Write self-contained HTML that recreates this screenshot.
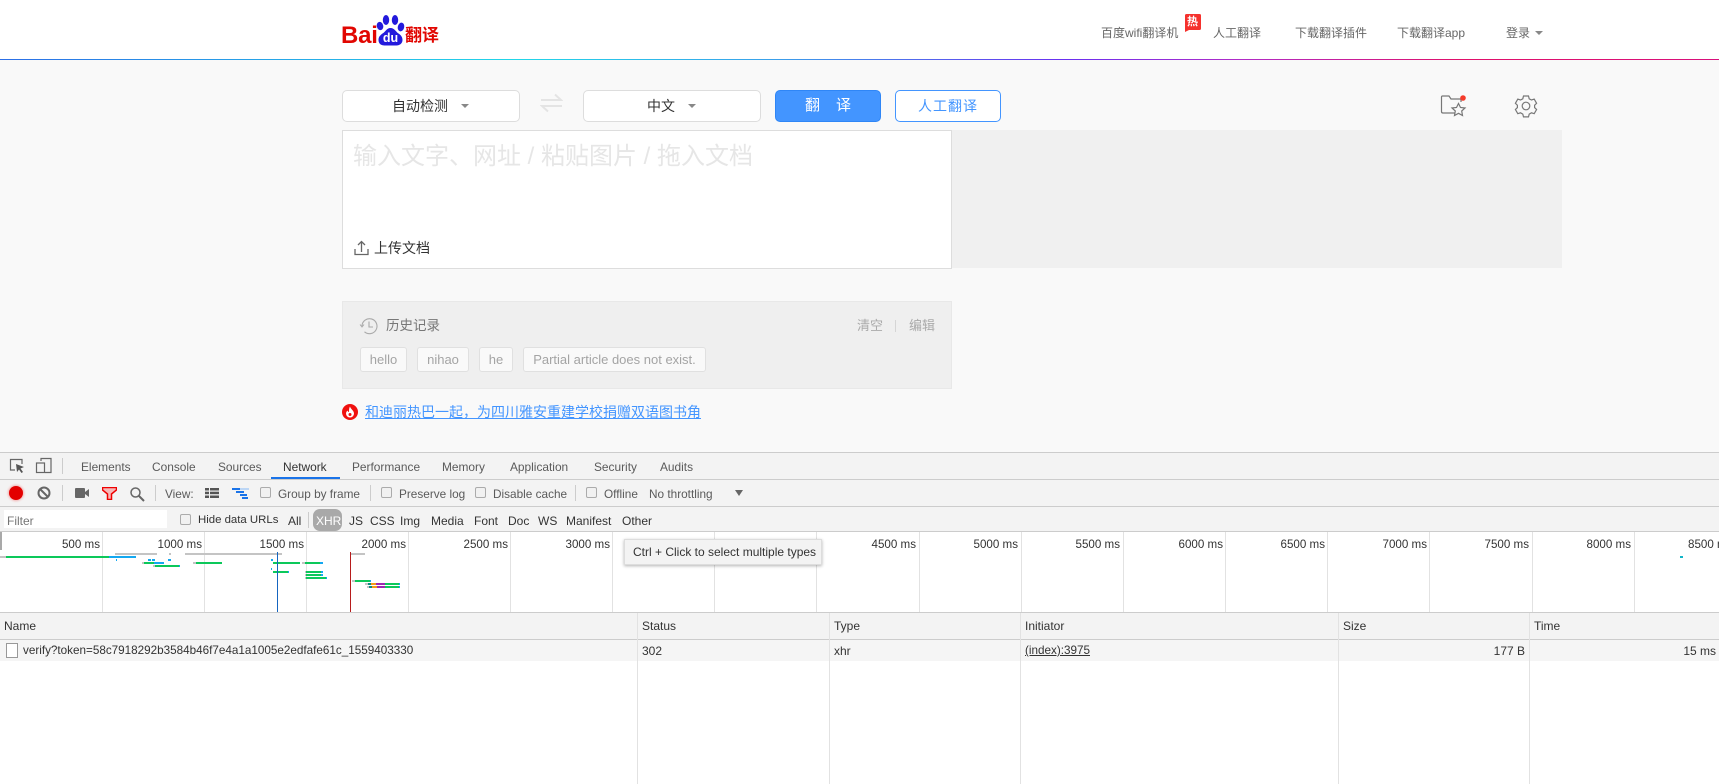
<!DOCTYPE html>
<html lang="zh-CN"><head><meta charset="utf-8"><title>百度翻译</title>
<style>
html,body{margin:0;padding:0;width:1719px;height:784px;overflow:hidden;background:#f9f9f9;font-family:"Liberation Sans","Noto Sans CJK SC",sans-serif}
div,span,svg{position:absolute;box-sizing:border-box}
.t{white-space:nowrap;line-height:16px;height:16px;font-size:12px}
.h{color:#666;top:25px}
.d{color:#5a5a5a;top:459px;font-size:11.900px}
.b{color:#5a5a5a;top:486px;font-size:11.800px}
.f{color:#333;top:513px}
.ms{color:#333;top:537px;text-align:right;width:70px;font-size:11.600px}
.c{background:#f1f1f1;border:1px solid #ababab;border-radius:2px;width:11px;height:11px}
.g{background:#e2e2e2;width:1px;top:532px;height:80px}
.v{background:#e2e2e2;width:1px;top:613px;height:171px}
.chip{top:347px;height:25px;background:#f9f9f9;border:1px solid #e0e0e0;border-radius:3px;color:#a4a4a4;font-size:13px;line-height:23px;text-align:center;white-space:nowrap}
.sep{background:#ccc;width:1px}
.r{height:2px}
.gr{background:#c4c4c4}.gn{background:#0cc85a}.bl{background:#14a8f0}.or{background:#f49b16}.pu{background:#9c27b0}.te{background:#0d8a80}
.sel{top:90px;height:32px;background:#fff;border:1px solid #ddd;border-radius:5px}
.tri{width:0;height:0;border-left:4px solid transparent;border-right:4px solid transparent;border-top:4px solid #888}
.th{color:#333;top:618px}.td{color:#333;top:643px}
</style></head><body>
<!-- header -->
<div style="left:0;top:0;width:1719px;height:59px;background:#fff"></div>
<div style="left:0;top:59px;width:1719px;height:1px;background:linear-gradient(90deg,#2c6ee6 0%,#22d6e8 30%,#3aa0ea 45%,#6a2ff0 62%,#b02cc8 72%,#e0106a 85%,#d8107c 100%)"></div>
<span class="t" style="left:341px;top:24px;font-size:24px;line-height:24px;height:24px;font-weight:bold;color:#e10601;letter-spacing:-.2px">Bai</span>
<svg style="left:376px;top:13px" width="30" height="33" viewBox="0 0 30 33">
<g fill="#2319dc"><ellipse cx="4" cy="13" rx="3.200" ry="4.200" transform="rotate(-15 4 13)"/><ellipse cx="10" cy="7" rx="3.200" ry="5"/><ellipse cx="19" cy="7" rx="3.200" ry="5"/><ellipse cx="25" cy="14" rx="3.200" ry="4.400" transform="rotate(15 25 14)"/>
<path d="M14.500 15c4 0 5 3.500 8 5.500 3 2 4 4 4 6.500 0 3.500-3 5.500-6 5.500h-12c-3.500 0-6-2-6-5.500 0-3 1.500-4.500 4-6.500 3.500-2 4-5.500 8-5.500z"/></g>
<text x="14.500" y="29" font-family="Liberation Sans" font-size="12.500" font-weight="bold" fill="#fff" text-anchor="middle">du</text></svg>
<span class="t" style="left:405px;top:27px;font-size:17px;line-height:18px;height:18px;font-weight:bold;color:#e10601">翻译</span>
<span class="t h" style="left:1101px">百度wifi翻译机</span>
<svg style="left:1184px;top:14px" width="17" height="18"><path d="M1 1.500Q1 0 2.500 0H15.500Q17 0 17 1.500V14.500Q17 16 15.500 16H5L1 18z" fill="#f5312d"/></svg>
<span class="t" style="left:1187px;top:14px;color:#fff;font-size:11px;font-weight:bold">热</span>
<span class="t h" style="left:1213px">人工翻译</span>
<span class="t h" style="left:1295px">下载翻译插件</span>
<span class="t h" style="left:1397px">下载翻译app</span>
<span class="t h" style="left:1506px">登录</span>
<div class="tri" style="left:1535px;top:31px"></div>
<!-- controls -->
<div class="sel" style="left:342px;width:178px"></div>
<span class="t" style="left:392px;top:98px;font-size:14px;color:#333">自动检测</span>
<div class="tri" style="left:461px;top:104px"></div>
<svg style="left:540px;top:93px" width="23" height="20" fill="none" stroke="#e4e4e4" stroke-width="2"><path d="M1 7H21L15 1.500M22 13H2L8 18.500"/></svg>
<div class="sel" style="left:583px;width:178px"></div>
<span class="t" style="left:647px;top:98px;font-size:14px;color:#333">中文</span>
<div class="tri" style="left:688px;top:104px"></div>
<div style="left:775px;top:90px;width:106px;height:32px;background:#4395ff;border:1px solid #2f86f6;border-radius:5px"></div>
<span class="t" style="left:805px;top:98px;font-size:15px;color:#fff">翻</span>
<span class="t" style="left:836px;top:98px;font-size:15px;color:#fff">译</span>
<div style="left:895px;top:90px;width:106px;height:32px;background:#fff;border:1px solid #4395ff;border-radius:5px"></div>
<span class="t" style="left:918px;top:98px;font-size:14px;letter-spacing:1px;color:#4395ff">人工翻译</span>
<svg style="left:1440px;top:94px" width="28" height="24" fill="none" stroke="#777" stroke-width="1.200"><path d="M16 19H3Q1.500 19 1.500 17.500V3Q1.500 2 2.500 2H9L11 5H20Q21 5 21 6V8"/><path d="M18.500 9.500L20.500 13.500 25 14 21.700 17 22.500 21.500 18.500 19.300 14.500 21.500 15.300 17 12 14 16.500 13.500z" fill="#f9f9f9"/><circle cx="23" cy="4" r="2.800" fill="#f53c2b" stroke="none"/></svg>
<svg style="left:1514px;top:94px" width="24" height="24" viewBox="0 0 24 24" fill="none" stroke="#777" stroke-width="1.200"><path d="M9.500 2h5l.7 2.800 2.300 1.200 2.700-.9 2.400 4.200-2 1.900v2.400l2 1.900-2.400 4.200-2.700-.9-2.300 1.300-.7 2.800h-5l-.7-2.800-2.300-1.300-2.700.9-2.400-4.200 2-1.900v-2.400l-2-1.900 2.400-4.200 2.700.9 2.300-1.200z"/><circle cx="12" cy="12" r="3.800"/></svg>
<!-- input -->
<div style="left:342px;top:130px;width:610px;height:139px;background:#fff;border:1px solid #ddd"></div>
<div style="left:952px;top:130px;width:610px;height:138px;background:#f0f0f0"></div>
<span class="t" style="left:353px;top:143px;font-size:24px;line-height:28px;height:28px;color:#e6e6e6">输入文字、网址 / 粘贴图片 / 拖入文档</span>
<svg style="left:354px;top:240px" width="15" height="16" fill="none" stroke="#666" stroke-width="1.300"><path d="M1 9V14.500H14V9M7.500 12V2M4 5L7.500 1.500 11 5"/></svg>
<span class="t" style="left:374px;top:240px;font-size:14px;color:#333">上传文档</span>
<!-- history -->
<div style="left:342px;top:301px;width:610px;height:88px;background:#efefef;border:1px solid #e8e8e8"></div>
<svg style="left:359px;top:317px" width="19" height="18" fill="none" stroke="#aaa" stroke-width="1.100"><path d="M3 9A7.500 7.500 0 1 1 5.500 14.800"/><path d="M10 4.500V10H14"/><path d="M1 7.500L3 10 5 7.500" stroke-width="1"/></svg>
<span class="t" style="left:386px;top:318px;font-size:13.500px;color:#777">历史记录</span>
<span class="t" style="left:857px;top:318px;font-size:13px;color:#aaa">清空</span>
<div style="left:895px;top:320px;width:1px;height:12px;background:#d5d5d5"></div>
<span class="t" style="left:909px;top:318px;font-size:13px;color:#aaa">编辑</span>
<div class="chip" style="left:360px;width:47px">hello</div>
<div class="chip" style="left:417px;width:52px">nihao</div>
<div class="chip" style="left:479px;width:34px">he</div>
<div class="chip" style="left:523px;width:183px">Partial article does not exist.</div>
<svg style="left:342px;top:404px" width="16" height="16"><circle cx="8" cy="8" r="8" fill="#f0110f"/><path d="M8 2.500C8.500 5 12 6.500 12 9.500A4 4 0 0 1 4 9.500C4 8 5 7 5.500 6.500 5.800 7.500 6.300 8 7 8 7 6 7 4 8 2.500z" fill="#fff"/><circle cx="8" cy="10.500" r="1.500" fill="#f0110f"/></svg>
<span class="t" style="left:365px;top:404px;font-size:14px;color:#4395ff;text-decoration:underline">和迪丽热巴一起，为四川雅安重建学校捐赠双语图书角</span>
<!-- devtools -->
<div style="left:0;top:452px;width:1719px;height:332px;background:#fff"></div>
<div style="left:0;top:452px;width:1719px;height:28px;background:#f3f3f3;border-top:1px solid #ccc;border-bottom:1px solid #ccc"></div>
<div style="left:0;top:480px;width:1719px;height:27px;background:#f3f3f3;border-bottom:1px solid #ccc"></div>
<div style="left:0;top:507px;width:1719px;height:25px;background:#f3f3f3;border-bottom:1px solid #ccc"></div>
<svg style="left:9px;top:458px" width="16" height="16" fill="none" stroke="#666" stroke-width="1.200"><path d="M6 12H1.500V1.500H13V6"/><path d="M7 6L15 9 11.500 10.500 14 14 12.500 15 10 11.500 8 14z" fill="#555" stroke="none"/></svg>
<svg style="left:35px;top:457px" width="17" height="17" fill="none" stroke="#666" stroke-width="1.200"><path d="M6 4V1.500H16V15.500H10"/><rect x="1.500" y="6" width="8" height="9.500"/></svg>
<div class="sep" style="left:62px;top:458px;height:16px"></div>
<span class="t d" style="left:81px">Elements</span>
<span class="t d" style="left:152px">Console</span>
<span class="t d" style="left:218px">Sources</span>
<span class="t d" style="left:283px;color:#333">Network</span>
<span class="t d" style="left:352px">Performance</span>
<span class="t d" style="left:442px">Memory</span>
<span class="t d" style="left:510px">Application</span>
<span class="t d" style="left:594px">Security</span>
<span class="t d" style="left:660px">Audits</span>
<div style="left:271px;top:477px;width:69px;height:2px;background:#1a73e8"></div>
<!-- toolbar -->
<div style="left:9px;top:486px;width:14px;height:14px;border-radius:50%;background:#e30000;box-shadow:0 0 2px 1px #f2b0b0"></div>
<svg style="left:37px;top:486px" width="14" height="14" fill="none" stroke="#666" stroke-width="2"><circle cx="7" cy="7" r="5.500"/><path d="M3 3L11 11"/></svg>
<div class="sep" style="left:62px;top:485px;height:16px"></div>
<svg style="left:75px;top:488px" width="14" height="10"><rect width="10" height="10" rx="1" fill="#666"/><path d="M10 4L14 1V9L10 6z" fill="#666"/></svg>
<svg style="left:102px;top:487px" width="15" height="13"><path d="M.5.500H14.500V3L9.500 7V12.500H5.500V7L.5 3z" fill="#f6b9b9" stroke="#e00" stroke-width="1.500"/></svg>
<svg style="left:130px;top:487px" width="15" height="15" fill="none" stroke="#666" stroke-width="1.500"><circle cx="5.500" cy="5.500" r="4.500"/><path d="M9 9L14 14" stroke-width="2"/></svg>
<div class="sep" style="left:155px;top:485px;height:16px"></div>
<span class="t b" style="left:165px">View:</span>
<svg style="left:205px;top:488px" width="14" height="10" fill="#555"><rect width="4" height="2.500"/><rect x="5" width="9" height="2.500"/><rect y="3.700" width="4" height="2.500"/><rect x="5" y="3.700" width="9" height="2.500"/><rect y="7.500" width="4" height="2.500"/><rect x="5" y="7.500" width="9" height="2.500"/></svg>
<svg style="left:232px;top:488px" width="17" height="11"><rect x="0" width="17" height="2" fill="#bcd6f5"/><rect x="0" width="8" height="2" fill="#1a73e8"/><rect x="4" y="3" width="8" height="2" fill="#1a73e8"/><rect x="8" y="6" width="7" height="2" fill="#1a73e8"/><rect x="10" y="9" width="6" height="2" fill="#1a73e8"/></svg>
<div class="c" style="left:260px;top:487px"></div>
<span class="t b" style="left:278px">Group by frame</span>
<div class="sep" style="left:370px;top:485px;height:16px"></div>
<div class="c" style="left:381px;top:487px"></div>
<span class="t b" style="left:399px">Preserve log</span>
<div class="c" style="left:475px;top:487px"></div>
<span class="t b" style="left:493px">Disable cache</span>
<div class="sep" style="left:575px;top:485px;height:16px"></div>
<div class="c" style="left:586px;top:487px"></div>
<span class="t b" style="left:604px">Offline</span>
<span class="t b" style="left:649px">No throttling</span>
<div class="tri" style="left:735px;top:490px;border-top:6px solid #666"></div>
<!-- filter row -->
<div style="left:4px;top:510px;width:163px;height:18px;background:#fff"></div>
<span class="t" style="left:7px;top:513px;color:#757575">Filter</span>
<div class="c" style="left:180px;top:514px"></div>
<span class="t f" style="left:198px;top:512px;font-size:11.400px">Hide data URLs</span>
<span class="t f" style="left:288px">All</span>
<div class="sep" style="left:308px;top:512px;height:16px"></div>
<div style="left:313px;top:509px;width:29px;height:22px;background:#a9a9a9;border-radius:7px"></div>
<span class="t f" style="left:316px;color:#fff">XHR</span>
<span class="t f" style="left:349px">JS</span>
<span class="t f" style="left:370px">CSS</span>
<span class="t f" style="left:400px">Img</span>
<span class="t f" style="left:431px">Media</span>
<span class="t f" style="left:474px">Font</span>
<span class="t f" style="left:508px">Doc</span>
<span class="t f" style="left:538px">WS</span>
<span class="t f" style="left:566px">Manifest</span>
<span class="t f" style="left:622px">Other</span>
<!-- timeline -->
<div style="left:0;top:532px;width:2px;height:18px;background:#a9a9a9"></div>
<div class="g" style="left:102px"></div><div class="g" style="left:204px"></div><div class="g" style="left:306px"></div><div class="g" style="left:408px"></div><div class="g" style="left:510px"></div><div class="g" style="left:612px"></div><div class="g" style="left:714px"></div><div class="g" style="left:816px"></div><div class="g" style="left:919px"></div><div class="g" style="left:1021px"></div><div class="g" style="left:1123px"></div><div class="g" style="left:1225px"></div><div class="g" style="left:1327px"></div><div class="g" style="left:1429px"></div><div class="g" style="left:1532px"></div><div class="g" style="left:1634px"></div>
<span class="t ms" style="left:30px">500 ms</span><span class="t ms" style="left:132px">1000 ms</span><span class="t ms" style="left:234px">1500 ms</span><span class="t ms" style="left:336px">2000 ms</span><span class="t ms" style="left:438px">2500 ms</span><span class="t ms" style="left:540px">3000 ms</span><span class="t ms" style="left:846px">4500 ms</span><span class="t ms" style="left:948px">5000 ms</span><span class="t ms" style="left:1050px">5500 ms</span><span class="t ms" style="left:1153px">6000 ms</span><span class="t ms" style="left:1255px">6500 ms</span><span class="t ms" style="left:1357px">7000 ms</span><span class="t ms" style="left:1459px">7500 ms</span><span class="t ms" style="left:1561px">8000 ms</span>
<span class="t ms" style="left:1688px;width:auto;text-align:left">8500 ms</span>
<div class="r gr" style="left:115px;top:553px;width:42px"></div><div class="r gr" style="left:169px;top:553px;width:2px"></div><div class="r gr" style="left:185px;top:553px;width:97px"></div><div class="r gr" style="left:351px;top:553px;width:14px"></div>
<div class="r gr" style="left:0;top:556px;width:6px"></div><div class="r gn" style="left:6px;top:556px;width:103px"></div><div class="r bl" style="left:109px;top:556px;width:27px"></div>
<div class="r bl" style="left:116px;top:559px;width:1px"></div><div class="r bl" style="left:148px;top:559px;width:3px"></div><div class="r bl" style="left:152px;top:559px;width:3px"></div><div class="r bl" style="left:168px;top:559px;width:3px"></div><div class="r bl" style="left:271px;top:559px;width:2px"></div><div class="r bl" style="left:271px;top:568px;width:1px"></div>
<div class="r gr" style="left:142px;top:562px;width:2px"></div><div class="r gn" style="left:144px;top:562px;width:10px"></div><div class="r bl" style="left:154px;top:562px;width:10px"></div>
<div class="r gr" style="left:193px;top:562px;width:3px"></div><div class="r gn" style="left:196px;top:562px;width:26px"></div>
<div class="r gr" style="left:153px;top:565px;width:2px"></div><div class="r gn" style="left:155px;top:565px;width:24px"></div><div class="r bl" style="left:179px;top:565px;width:1px"></div>
<div class="r gn" style="left:273px;top:562px;width:27px"></div>
<div class="r gr" style="left:302px;top:562px;width:3px"></div><div class="r gn" style="left:305px;top:562px;width:15px"></div><div class="r bl" style="left:320px;top:562px;width:3px"></div>
<div class="r gn" style="left:273px;top:571px;width:15px"></div><div class="r bl" style="left:288px;top:571px;width:1px"></div>
<div class="r gr" style="left:305px;top:571px;width:1px"></div><div class="r gn" style="left:306px;top:571px;width:15px"></div><div class="r bl" style="left:321px;top:571px;width:2px"></div>
<div class="r gr" style="left:305px;top:574px;width:1px"></div><div class="r gn" style="left:306px;top:574px;width:15px"></div><div class="r bl" style="left:321px;top:574px;width:2px"></div>
<div class="r gr" style="left:305px;top:577px;width:1px"></div><div class="r gn" style="left:306px;top:577px;width:20px"></div><div class="r bl" style="left:326px;top:577px;width:1px"></div>
<div class="r gr" style="left:352px;top:580px;width:3px"></div><div class="r gn" style="left:355px;top:580px;width:15px"></div><div class="r bl" style="left:370px;top:580px;width:1px"></div>
<div class="r gr" style="left:365px;top:583px;width:3px"></div><div class="r te" style="left:368px;top:583px;width:3px"></div><div class="r or" style="left:371px;top:583px;width:5px"></div><div class="r pu" style="left:376px;top:583px;width:9px"></div><div class="r gn" style="left:385px;top:583px;width:14px"></div><div class="r bl" style="left:399px;top:583px;width:1px"></div>
<div class="r gr" style="left:367px;top:586px;width:2px"></div><div class="r te" style="left:369px;top:586px;width:3px"></div><div class="r or" style="left:372px;top:586px;width:5px"></div><div class="r pu" style="left:377px;top:586px;width:8px"></div><div class="r gn" style="left:385px;top:586px;width:14px"></div><div class="r bl" style="left:399px;top:586px;width:1px"></div>
<div style="left:277px;top:552px;width:1px;height:60px;background:#1565c0"></div>
<div style="left:350px;top:552px;width:1px;height:60px;background:#b71c1c"></div>
<div class="r" style="left:1680px;top:556px;width:3px;background:#12b5c8"></div>
<!-- tooltip -->
<div style="left:624px;top:539px;width:198px;height:26px;background:#f3f3f3;border:1px solid #ddd;box-shadow:0 1px 3px rgba(0,0,0,.3)"></div>
<span class="t" style="left:633px;top:544px;color:#333">Ctrl + Click to select multiple types</span>
<!-- table -->
<div style="left:0;top:612px;width:1719px;height:28px;background:#f3f3f3;border-top:1px solid #ccc;border-bottom:1px solid #ccc"></div>
<div style="left:0;top:640px;width:1719px;height:21px;background:#f5f5f5"></div>
<div class="v" style="left:637px"></div><div class="v" style="left:829px"></div><div class="v" style="left:1020px"></div><div class="v" style="left:1338px"></div><div class="v" style="left:1529px"></div>
<span class="t th" style="left:4px">Name</span><span class="t th" style="left:642px">Status</span><span class="t th" style="left:834px">Type</span><span class="t th" style="left:1025px">Initiator</span><span class="t th" style="left:1343px">Size</span><span class="t th" style="left:1534px">Time</span>
<div style="left:6px;top:643px;width:12px;height:15px;background:#fff;border:1px solid #999"></div>
<span class="t td" style="left:23px;font-size:11.700px">verify?token=58c7918292b3584b46f7e4a1a1005e2edfafe61c_1559403330</span>
<span class="t td" style="left:642px">302</span>
<span class="t td" style="left:834px">xhr</span>
<span class="t td" style="left:1025px;font-size:11.700px;text-decoration:underline">(index):3975</span>
<span class="t td" style="left:1425px;width:100px;text-align:right">177 B</span>
<span class="t td" style="left:1616px;width:100px;text-align:right">15 ms</span>
</body></html>
